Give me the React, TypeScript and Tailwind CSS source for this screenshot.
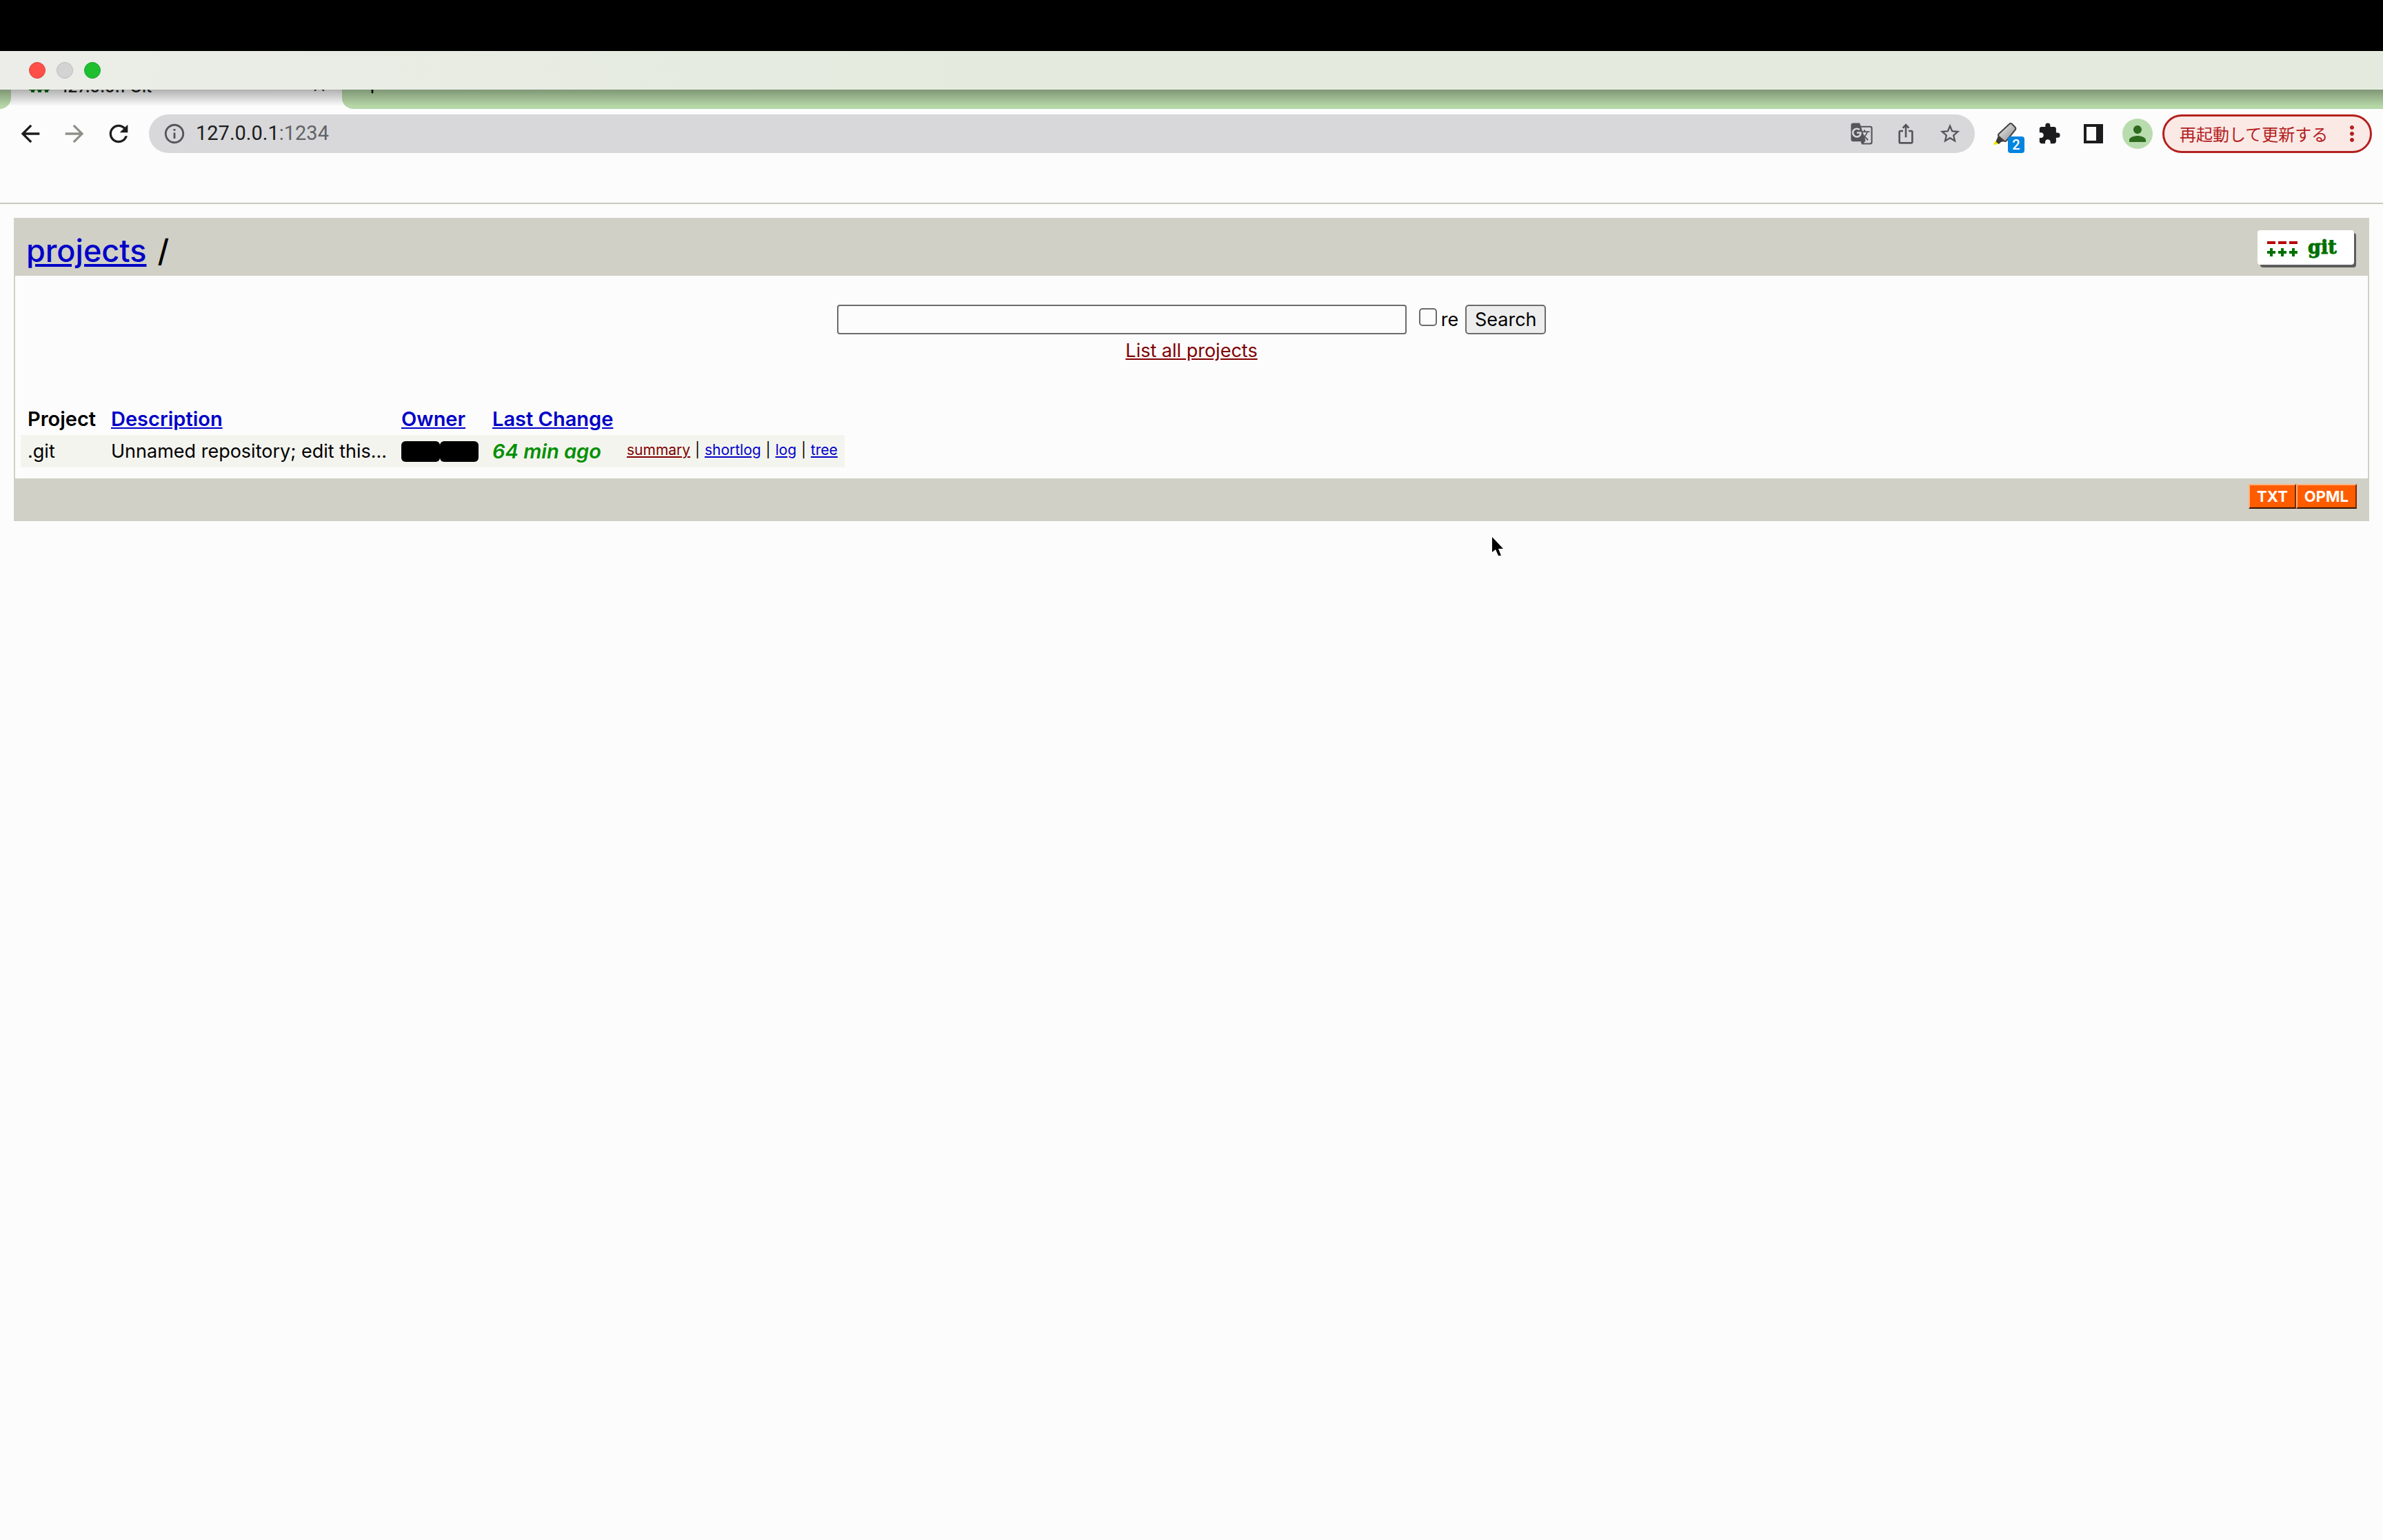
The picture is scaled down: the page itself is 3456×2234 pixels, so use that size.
import type { ReactNode } from 'react'
import {
  MdAdd,
  MdArrowBack,
  MdArrowForward,
  MdClose,
  MdExtension,
  MdGTranslate,
  MdInfoOutline,
  MdIosShare,
  MdMoreVert,
  MdPerson,
  MdRefresh,
  MdStarBorder,
} from 'react-icons/md'

const ROW_LINKS = [
  { label: 'summary', visited: true },
  { label: 'shortlog', visited: false },
  { label: 'log', visited: false },
  { label: 'tree', visited: false },
]

function IconButton({ label, className = '', children }: { label: string; className?: string; children: ReactNode }) {
  return (
    <button type="button" aria-label={label} className={`flex h-11 shrink-0 items-center justify-center ${className}`}>
      {children}
    </button>
  )
}

function HighlighterIcon() {
  return (
    <svg width="36" height="36" viewBox="0 0 36 36" aria-hidden="true">
      <defs>
        <linearGradient id="marker" x1="0" y1="0" x2="1" y2="1">
          <stop offset="0" stopColor="#f2f2f2" />
          <stop offset="1" stopColor="#8a8a8a" />
        </linearGradient>
      </defs>
      <path d="M1 33l3-5 5 1-1 4-6 1z" fill="#f2e600" />
      <path d="M5 28l3-7 9 8-5 1-3 3-4-3z" fill="#3a3a3a" />
      <path d="M9 18L24 4q2-2 4 0l4 4q2 2 1 4L20 28q-2 2-4 0l-7-6q-2-2 0-4z" fill="url(#marker)" stroke="#444" strokeWidth="2" />
    </svg>
  )
}

function SidePanelIcon() {
  return (
    <svg width="28" height="28" viewBox="0 0 28 28" aria-hidden="true">
      <path d="M0 0h28v28H0zM4 4v20h14V4z" fill="#1c1c1e" fillRule="evenodd" />
    </svg>
  )
}

function GitLogo() {
  return (
    <svg width="144" height="54" viewBox="0 0 144 54" aria-hidden="true">
      <rect x="4" y="4" width="139" height="50" rx="4" fill="#5c5c5c" />
      <rect width="140" height="50" rx="4" fill="#fff" />
      <path d="M14 16h12v4H14zM30 16h12v4H30zM46 16h12v4H46z" fill="#b80000" />
      <path
        d="M18 26h4v4h4v4h-4v4h-4v-4h-4v-4h4zM34 26h4v4h4v4h-4v4h-4v-4h-4v-4h4zM50 26h4v4h4v4h-4v4h-4v-4h-4v-4h4z"
        fill="#007000"
      />
      <text x="73" y="34" fill="#007000" stroke="#007000" fontFamily="DejaVu Serif, serif" fontSize="27" fontWeight="700">
        git
      </text>
    </svg>
  )
}

function TabStrip() {
  return (
    <div className="relative flex h-7 overflow-hidden bg-[#fcfcfc]">
      <div className="w-4 rounded-br-2xl bg-[#b6d7a8]" />
      <div className="flex w-[480px] items-end gap-4 pr-5 pb-5 pl-6">
        <svg width="32" height="24" viewBox="0 0 32 24" className="shrink-0" aria-hidden="true">
          <path d="M5 8h5v5h2v4h-2v3H5v-3H2v-4h3zM15 8h5v5h2v4h-2v3h-5v-3h-2v-4h2zM25 8h5v5h2v4h-2v3h-5v-3h-2v-4h2z" fill="#006a12" />
        </svg>
        <span className="flex-1 text-2xl leading-6 font-medium text-[#222]">127.0.0.1 Git</span>
        <MdClose size={26} className="text-[#333]" />
      </div>
      <div className="flex flex-1 items-end rounded-bl-2xl bg-[#b6d7a8] pb-4 pl-7">
        <MdAdd size={32} className="shrink-0 text-black" />
      </div>
      <div className="absolute inset-x-0 top-0 h-6 bg-gradient-to-b from-black/30 to-transparent" />
    </div>
  )
}

function Toolbar() {
  return (
    <div className="border-b-2 border-[#c9c9bc] bg-[#fcfcfc] pt-2 pb-[72px]">
      <div className="flex h-14 items-center pr-4 pl-[22px]">
        <IconButton label="Back" className="w-11 text-[#1c1c1e]">
          <MdArrowBack size={40} />
        </IconButton>
        <IconButton label="Forward" className="ml-5 w-11 text-[#909088]">
          <MdArrowForward size={40} />
        </IconButton>
        <IconButton label="Reload" className="ml-5 w-11 text-[#1c1c1e]">
          <MdRefresh size={40} />
        </IconButton>

        <div className="ml-[22px] flex h-14 flex-1 items-center rounded-full bg-[#d8d8da] pr-[14px] pl-5">
          <MdInfoOutline size={34} className="shrink-0 text-[#55555a]" />
          <label htmlFor="address" className="sr-only">
            Address
          </label>
          <input
            id="address"
            defaultValue="127.0.0.1"
            className="ml-[14px] field-sizing-content bg-transparent font-[Roboto,sans-serif] text-[29px] text-[#1c1c1e] outline-none"
          />
          <span className="flex-1 font-[Roboto,sans-serif] text-[29px] text-[#636368]">:1234</span>
          <div className="flex gap-5 text-[#55555a]">
            <IconButton label="Translate" className="w-11">
              <MdGTranslate size={34} />
            </IconButton>
            <IconButton label="Share" className="w-11">
              <MdIosShare size={32} />
            </IconButton>
            <IconButton label="Bookmark" className="w-11">
              <MdStarBorder size={34} />
            </IconButton>
          </div>
        </div>

        <div className="ml-[22px] flex items-center gap-5 text-[#1c1c1e]">
          <IconButton label="Highlighter" className="relative w-11">
            <HighlighterIcon />
            <span className="absolute right-[-6px] bottom-[-6px] flex size-6 items-center justify-center rounded-[4px] bg-[#0084e0] font-[Roboto,sans-serif] text-[20px] font-medium text-white">
              2
            </span>
          </IconButton>
          <IconButton label="Extensions" className="w-11">
            <MdExtension size={34} />
          </IconButton>
          <IconButton label="Side panel" className="w-11">
            <SidePanelIcon />
          </IconButton>
          <IconButton label="Profile" className="w-11 rounded-full bg-[#b9dcae] text-[#2f6b1e]">
            <MdPerson size={36} />
          </IconButton>
        </div>

        <button
          type="button"
          className="ml-[14px] flex h-14 w-[304px] shrink-0 items-center justify-between rounded-full border-3 border-[#b3201d] bg-[#fbe9e6] pr-2 pl-[22px] font-['Noto_Sans_CJK_JP',sans-serif] text-2xl text-[#b3201d]"
        >
          再起動して更新する
          <MdMoreVert size={36} />
        </button>
      </div>
    </div>
  )
}

function SearchForm() {
  return (
    <form className="flex flex-col items-center pt-[42px]" onSubmit={(e) => e.preventDefault()}>
      <div className="flex h-[43px] items-center">
        <input
          type="text"
          aria-label="Search projects"
          className="h-[43px] w-[826px] rounded-[4px] border-2 border-[#6b6b6b] bg-[#fcfcfc] px-2"
        />
        <input
          type="checkbox"
          id="re"
          className="mb-2 ml-[18px] size-[26px] appearance-none rounded-[5px] border-2 border-[#6b6b6b] bg-[#fcfcfc]"
        />
        <label htmlFor="re" className="ml-[6px]">
          re
        </label>
        <button type="submit" className="ml-[10px] h-[43px] w-[117px] rounded-[5px] border-2 border-[#6b6b6b] bg-[#ededed] leading-[39px]">
          Search
        </button>
      </div>
      <a href="#" className="mt-1 text-[#800000] underline">
        List all projects
      </a>
    </form>
  )
}

function ProjectTable() {
  return (
    <table className="mt-[56px] mb-4 ml-2 w-[1195px] table-fixed text-left">
      <thead className="text-[29px]">
        <tr>
          <th className="w-[121px] px-[10px] py-1 font-semibold">Project</th>
          <th className="w-[421px] px-[10px] py-1 font-semibold">
            <a href="#" className="text-[#0000c8] underline">Description</a>
          </th>
          <th className="w-[132px] px-[10px] py-1 font-semibold">
            <a href="#" className="text-[#0000c8] underline">Owner</a>
          </th>
          <th className="w-[195px] px-[10px] py-1 font-semibold whitespace-nowrap">
            <a href="#" className="text-[#0000c8] underline">Last Change</a>
          </th>
          <th />
        </tr>
      </thead>
      <tbody>
        <tr className="bg-[#f4f4ef]">
          <td className="px-[10px] py-1">.git</td>
          <td className="px-[10px] py-1 whitespace-nowrap">Unnamed repository; edit this...</td>
          <td className="px-[10px] py-1">
            <div className="flex">
              <span className="h-[30px] w-14 rounded-md bg-black" />
              <span className="h-[30px] w-14 rounded-md bg-black" />
            </div>
          </td>
          <td className="px-[10px] py-1 text-[29px] font-semibold whitespace-nowrap text-[#009000] italic">64 min ago</td>
          <td className="px-[10px] pb-1 text-[21px] whitespace-nowrap">
            {ROW_LINKS.map((link, i) => (
              <span key={link.label}>
                {i > 0 && <span className="mx-px"> | </span>}
                <a href="#" className={link.visited ? 'text-[#800000] underline' : 'text-[#0000c8] underline'}>
                  {link.label}
                </a>
              </span>
            ))}
          </td>
        </tr>
      </tbody>
    </table>
  )
}

export default function App() {
  return (
    <div className="min-h-screen bg-[#fcfcfc] font-[Inter,'Noto_Sans_CJK_JP',sans-serif]">
      <div className="h-[74px] bg-black" />

      {/* Window title bar */}
      <div className="flex h-14 items-center gap-4 bg-gradient-to-r from-[#ecede8] to-[#e4ebde] to-40% pl-[42px]">
        <button type="button" aria-label="Close window" className="size-6 rounded-full border border-[#d94640] bg-[#ff4f49]" />
        <button type="button" aria-label="Minimize window" className="size-6 rounded-full border border-[#bdbdbd] bg-[#d3d3d3]" />
        <button type="button" aria-label="Zoom window" className="size-6 rounded-full border border-[#1aa32b] bg-[#1fbf30]" />
      </div>

      <TabStrip />
      <Toolbar />

      {/* gitweb page */}
      <main className="m-5 border-x-2 border-[#d0d0c6] text-[27px] leading-[39px] text-black">
        <header className="flex h-[84px] items-start justify-between bg-[#d0d0c6] pt-[18px] pr-4 pl-4">
          <h1 className="flex gap-4 pt-[6px] text-[45px] leading-[48px] font-medium">
            <a href="#" className="text-[#0000c8] underline">projects</a>
            <span>/</span>
          </h1>
          <a href="#" aria-label="git homepage">
            <GitLogo />
          </a>
        </header>

        <SearchForm />
        <ProjectTable />

        <footer className="flex h-[62px] justify-end bg-[#d0d0c6] pt-2 pr-4 text-[22px] leading-8 font-bold text-white">
          <a href="#" className="h-9 border-2 border-t-[#ffb384] border-r-[#7a2a00] border-b-[#331100] border-l-[#ffb384] bg-[#ff5c00] px-[10px]">
            TXT
          </a>
          <a href="#" className="h-9 border-2 border-t-[#ffb384] border-r-[#7a2a00] border-b-[#331100] border-l-[#ffb384] bg-[#ff5c00] px-[10px]">
            OPML
          </a>
        </footer>
      </main>

      {/* Mouse pointer */}
      <svg className="absolute top-[775px] left-[2158px]" width="28" height="38" viewBox="0 0 28 38" aria-hidden="true">
        <path d="M6 4v22l5-4 4 9h4l-4-10h7z" fill="#000" stroke="#fff" strokeWidth="2" paintOrder="stroke" />
      </svg>
    </div>
  )
}
